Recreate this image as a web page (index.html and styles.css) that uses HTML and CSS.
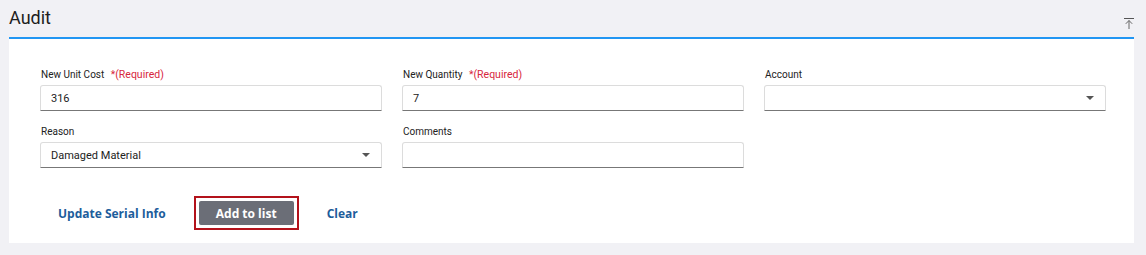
FILE: index.html
```html
<!DOCTYPE html>
<html>
<head>
<meta charset="utf-8">
<link rel="stylesheet" href="styles.css">
</head>
<body>
<div class="header">
  <h1 class="title">Audit</h1>
  <span class="collapse" aria-label="collapse">
    <svg width="10" height="11" viewBox="0 0 10 11"><line x1="0" y1="0.5" x2="10" y2="0.5" stroke="#555" stroke-width="1"/><path d="M5 2.5 V11 M1.8 5.8 L5 2.5 L8.2 5.8" fill="none" stroke="#666" stroke-width="1"/></svg>
  </span>
</div>
<div class="panel">
  <div class="grid">
    <div class="field">
      <label class="label">New Unit Cost <span class="req">*(Required)</span></label>
      <div class="input">316</div>
    </div>
    <div class="field">
      <label class="label">New Quantity <span class="req">*(Required)</span></label>
      <div class="input">7</div>
    </div>
    <div class="field">
      <label class="label">Account</label>
      <div class="input select"><span></span><span class="caret"></span></div>
    </div>
    <div class="field">
      <label class="label">Reason</label>
      <div class="input select"><span>Damaged Material</span><span class="caret"></span></div>
    </div>
    <div class="field">
      <label class="label">Comments</label>
      <div class="input"></div>
    </div>
  </div>
  <div class="actions">
    <button class="link">Update Serial Info</button>
    <div class="focus-ring"><button class="primary">Add to list</button></div>
    <button class="link">Clear</button>
  </div>
</div>
</body>
</html>
```

FILE: styles.css
```css
html, body {
  margin: 0;
  padding: 0;
  background: #f1f1f5;
  font-family: Roboto, "Liberation Sans", Arial, sans-serif;
}
.header {
  height: 37px;
  display: flex;
  align-items: flex-start;
  justify-content: space-between;
  padding: 0 12px 0 9px;
  box-sizing: border-box;
}
.title {
  margin: 0;
  padding-top: 7px;
  font-size: 18px;
  line-height: 22px;
  font-weight: 400;
  color: #1d1d1d;
}
.collapse {
  display: block;
  padding-top: 18px;
  line-height: 0;
}
.panel {
  margin: 0 12px 12px 9px;
  background: #fff;
  border-top: 2px solid #2196f3;
  padding: 29px 0 13px 31px;
}
.grid {
  display: grid;
  grid-template-columns: repeat(3, 342px);
  column-gap: 20px;
  row-gap: 14px;
}
.label {
  display: block;
  font-size: 10px;
  line-height: 14px;
  height: 14px;
  color: #222;
  margin-bottom: 3px;
  padding-left: 1px;
}
.req {
  color: #d7263d;
  font-size: 10.5px;
  margin-left: 4px;
}
.input {
  box-sizing: border-box;
  height: 26px;
  border: 1px solid #dcdcdc;
  border-bottom: 1.5px solid #777;
  border-radius: 3px 3px 0 0;
  padding: 0 10px;
  display: flex;
  align-items: center;
  justify-content: space-between;
  font-size: 11px;
  color: #222;
}
.caret {
  width: 0;
  height: 0;
  border-left: 4px solid transparent;
  border-right: 4px solid transparent;
  border-top: 4.5px solid #555;
  margin-right: 1px;
}
.actions {
  display: flex;
  align-items: center;
  gap: 28px;
  margin-top: 28px;
  padding-left: 18px;
}
.link {
  border: 0;
  background: none;
  padding: 0;
  font-family: "Open Sans", sans-serif;
  font-weight: 700;
  font-size: 12px;
  color: #1d5d9b;
}
.focus-ring {
  border: 2px solid #b3121b;
  padding: 3px;
  line-height: 0;
}
.primary {
  width: 95px;
  height: 24px;
  border: 0;
  border-radius: 2px;
  background: #6b6e77;
  color: #fff;
  font-family: "Open Sans", sans-serif;
  font-weight: 700;
  font-size: 12px;
  padding: 0;
}
```
